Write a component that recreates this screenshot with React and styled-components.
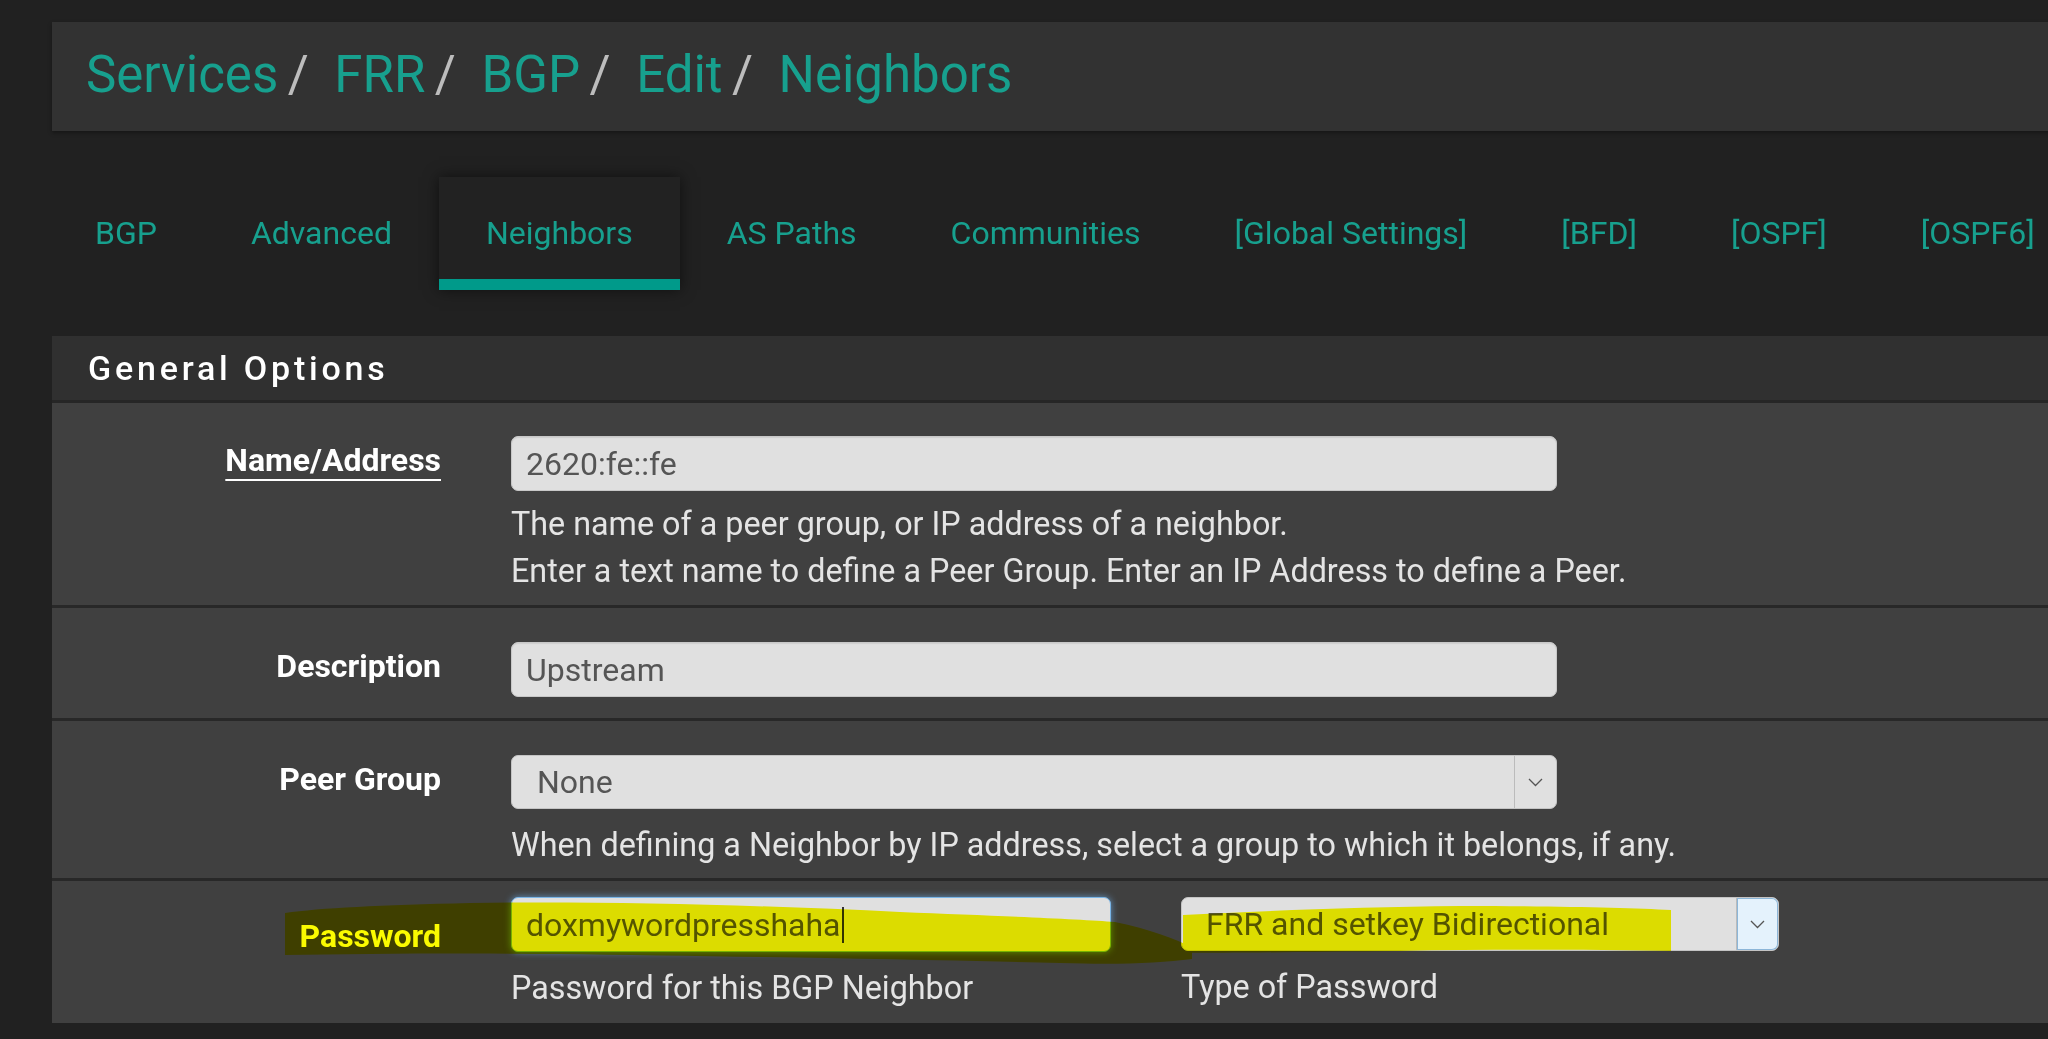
import React from 'react'
import styled, { createGlobalStyle } from 'styled-components'

const GlobalStyle = createGlobalStyle`
  html, body {
    margin: 0;
    padding: 0;
    background: #212121;
    overflow: hidden;
  }
  body {
    font-family: Roboto, "Liberation Sans", sans-serif;
    color: #e6e6e6;
  }
`

const tabs = ['BGP', 'Advanced', 'Neighbors', 'AS Paths', 'Communities', '[Global Settings]', '[BFD]', '[OSPF]', '[OSPF6]']
const crumbs = ['Services', 'FRR', 'BGP', 'Edit', 'Neighbors']

function Chevron() {
  return (
    <svg width="15" height="9" viewBox="0 0 15 9">
      <polyline points="1,1 7.5,7.5 14,1" fill="none" stroke="#555" strokeWidth="1.3" />
    </svg>
  )
}

// freehand marker stroke drawn over the password row (page coordinates)
function Highlighter() {
  return (
    <Marker width="1800" height="150">
      <g transform="translate(-52 -880)">
        <path d="M285 912 C 320 907, 380 904, 470 902 C 600 900, 760 904, 900 911 C 1000 915, 1080 918, 1115 921 C 1150 928, 1175 938, 1192 946 L 1192 958 C 1160 962, 1120 964, 1060 962 C 900 958, 700 955, 560 953 C 450 952, 360 953, 285 954 Z" />
        <path d="M1183 914 C 1260 910, 1360 906, 1460 905 C 1560 905, 1630 907, 1671 909 L 1671 950 C 1600 949, 1500 948, 1400 950 C 1300 951, 1230 952, 1183 952 Z" />
      </g>
    </Marker>
  )
}

export default function App() {
  return (
    <>
      <GlobalStyle />
      <Page>
        <HeaderBar>
          <Breadcrumb>
            {crumbs.map((c, i) => (
              <React.Fragment key={c}>
                {i > 0 && <Slash>/</Slash>}
                <Crumb>{c}</Crumb>
              </React.Fragment>
            ))}
          </Breadcrumb>
        </HeaderBar>

        <TabBar>
          {tabs.map(t => (
            <Tab key={t} $active={t === 'Neighbors'}>{t}</Tab>
          ))}
        </TabBar>

        <Panel>
          <PanelHeading>General Options</PanelHeading>

          <Row $top={33} $bottom={10}>
            <Label $underline>Name/Address</Label>
            <Content>
              <Field>2620:fe::fe</Field>
              <Help>
                The name of a peer group, or IP address of a neighbor.<br />
                Enter a text name to define a Peer Group. Enter an IP Address to define a Peer.
              </Help>
            </Content>
          </Row>

          <Row $top={34} $bottom={21}>
            <Label>Description</Label>
            <Content>
              <Field>Upstream</Field>
            </Content>
          </Row>

          <Row $top={34} $bottom={9}>
            <Label>Peer Group</Label>
            <Content>
              <Select>
                <SelectText>None</SelectText>
                <ArrowBox><Chevron /></ArrowBox>
              </Select>
              <Help $gap={13}>When defining a Neighbor by IP address, select a group to which it belongs, if any.</Help>
            </Content>
          </Row>

          <Row $top={16} $bottom={11} $last>
            <Label $shift={15}>Password</Label>
            <Split>
              <div>
                <Field $width={600} $focus>doxmywordpresshaha<Caret /></Field>
                <Help $gap={13}>Password for this BGP Neighbor</Help>
              </div>
              <div>
                <Select $width={598}>
                  <SelectText $pad={24}>FRR and setkey Bidirectional</SelectText>
                  <ArrowBox $focus><Chevron /></ArrowBox>
                </Select>
                <Help $gap={13}>Type of Password</Help>
              </div>
            </Split>
            <Highlighter />
          </Row>
        </Panel>
      </Page>
    </>
  )
}

const Page = styled.div`
  width: 2120px;
  padding: 22px 0 0 52px;
  min-height: 1039px;
  box-sizing: border-box;
`

const HeaderBar = styled.div`
  height: 109px;
  background: #323232;
  box-shadow: 0 2px 4px rgba(0, 0, 0, 0.35);
  display: flex;
  align-items: center;
  padding-left: 34px;
`

const Breadcrumb = styled.h1`
  margin: 0;
  font-weight: 400;
  font-size: 51px;
  line-height: 1;
  display: flex;
  align-items: baseline;
  padding-bottom: 4px;
`

const Crumb = styled.span`
  color: #17a08e;
`

const Slash = styled.span`
  color: #bdbdbd;
  margin: 0 25.5px 0 9.5px;
`

const TabBar = styled.div`
  display: flex;
  margin: 46px 0 46px -4px;
`

const Tab = styled.div`
  height: 113px;
  box-sizing: border-box;
  padding: 9px 47px 0;
  display: flex;
  align-items: center;
  font-size: 32px;
  color: #17a08e;
  border-bottom: 11px solid ${p => (p.$active ? '#009a8a' : 'transparent')};
  background: ${p => (p.$active ? '#222' : 'transparent')};
  box-shadow: ${p => (p.$active ? '0 0 14px rgba(0,0,0,0.55)' : 'none')};
  white-space: nowrap;
`

const Panel = styled.div`
  background: #404040;
`

const PanelHeading = styled.h2`
  margin: 0;
  height: 64px;
  background: #303030;
  border-bottom: 3px solid #262626;
  display: flex;
  align-items: center;
  padding-left: 36px;
  font-size: 34px;
  font-weight: 500;
  letter-spacing: 3.8px;
  color: #fff;
`

const Row = styled.div`
  position: relative;
  display: grid;
  grid-template-columns: 389px 1fr;
  column-gap: 70px;
  padding: ${p => p.$top}px 0 ${p => p.$bottom}px;
  border-bottom: ${p => (p.$last ? 'none' : '3px solid #282828')};
`

const Label = styled.div`
  text-align: right;
  font-size: 32px;
  font-weight: 700;
  line-height: 48px;
  padding-top: ${p => p.$shift || 0}px;
  color: #fff;
  text-decoration: ${p => (p.$underline ? 'underline' : 'none')};
  text-decoration-thickness: 2px;
  text-underline-offset: 8px;
`

const Content = styled.div``

const Split = styled.div`
  display: flex;
  gap: 70px;
`

const Field = styled.div`
  width: ${p => p.$width || 1046}px;
  height: 55px;
  box-sizing: border-box;
  background: #e0e0e0;
  border: 1px solid ${p => (p.$focus ? '#78b4e6' : '#c8c8c8')};
  box-shadow: ${p => (p.$focus ? '0 0 7px rgba(110,175,235,0.75)' : 'inset 0 1px 1px rgba(0,0,0,0.08)')};
  border-radius: 7px;
  padding: 0 14px;
  display: flex;
  align-items: center;
  font-size: 32px;
  color: #555;
  white-space: nowrap;
`

const Caret = styled.span`
  display: inline-block;
  width: 2px;
  height: 36px;
  background: #333;
  margin-left: 1px;
`

const Select = styled.div`
  width: ${p => p.$width || 1046}px;
  height: 54px;
  box-sizing: border-box;
  background: #e0e0e0;
  border: 1px solid #c4c4c4;
  border-radius: 7px;
  display: flex;
  align-items: stretch;
  font-size: 32px;
  color: #555;
`

const SelectText = styled.div`
  flex: 1;
  display: flex;
  align-items: center;
  padding-left: ${p => p.$pad || 25}px;
`

const ArrowBox = styled.div`
  width: 41px;
  display: flex;
  align-items: center;
  justify-content: center;
  border-left: 1px solid #bbb;
  background: ${p => (p.$focus ? '#e4f2fc' : 'transparent')};
  box-shadow: ${p => (p.$focus ? 'inset 0 0 0 1px #8cb6d8' : 'none')};
  border-radius: 0 6px 6px 0;
`

const Help = styled.div`
  margin-top: ${p => p.$gap || 10}px;
  font-size: 32.3px;
  line-height: 47px;
  color: #e4e4e4;
  white-space: nowrap;
`

const Marker = styled.svg`
  position: absolute;
  left: 0;
  top: 0;
  pointer-events: none;
  mix-blend-mode: multiply;
  fill: #fbfb00;
`
